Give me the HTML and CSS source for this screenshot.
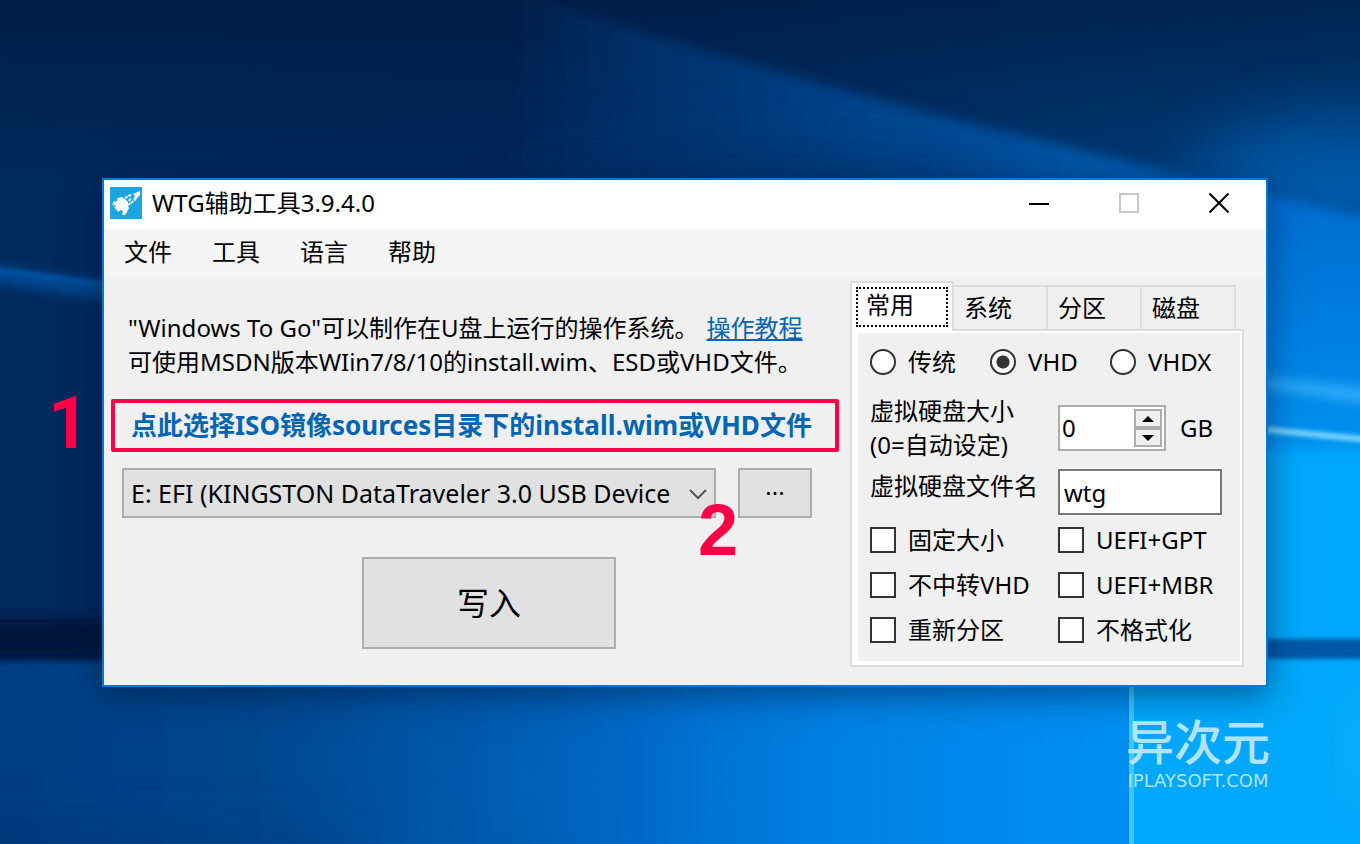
FILE: index.html
```
<!DOCTYPE html>
<html lang="zh-CN">
<head>
  <meta charset="UTF-8">
  <title>WTG辅助工具3.9.4.0</title>
  <link rel="stylesheet" href="styles.css">
</head>
<body>

  <svg class="wallpaper" viewBox="0 0 1360 844" preserveAspectRatio="none" aria-hidden="true">
    <defs>
      <linearGradient id="sky" x1="0" y1="0" x2="1" y2="0">
        <stop offset="0" stop-color="#002a5c"></stop>
        <stop offset="0.4" stop-color="#00285c"></stop>
        <stop offset="0.75" stop-color="#003670"></stop>
        <stop offset="1" stop-color="#003e7c"></stop>
      </linearGradient>
      <linearGradient id="topShade" x1="0" y1="0" x2="0" y2="1">
        <stop offset="0" stop-color="#001a40" stop-opacity="0.7"></stop>
        <stop offset="1" stop-color="#001a40" stop-opacity="0"></stop>
      </linearGradient>
      <linearGradient id="beam" gradientUnits="userSpaceOnUse" x1="510" y1="0" x2="1230" y2="0">
        <stop offset="0" stop-color="#003a7c" stop-opacity="0"></stop>
        <stop offset="0.2" stop-color="#003a7c" stop-opacity="0.6"></stop>
        <stop offset="0.5" stop-color="#00468e"></stop>
        <stop offset="0.85" stop-color="#0058aa"></stop>
        <stop offset="1" stop-color="#005aac"></stop>
      </linearGradient>
      <linearGradient id="side" x1="0" y1="0" x2="0" y2="1">
        <stop offset="0" stop-color="#006cd0"></stop>
        <stop offset="0.3" stop-color="#007fe2"></stop>
        <stop offset="0.6" stop-color="#0098f4"></stop>
        <stop offset="1" stop-color="#00aeff"></stop>
      </linearGradient>
      <linearGradient id="floor" x1="0" y1="0" x2="1" y2="0">
        <stop offset="0" stop-color="#003c80"></stop>
        <stop offset="0.25" stop-color="#004890"></stop>
        <stop offset="0.5" stop-color="#0060b8"></stop>
        <stop offset="0.62" stop-color="#0072d2"></stop>
        <stop offset="0.76" stop-color="#0082e6"></stop>
        <stop offset="1" stop-color="#0090f2"></stop>
      </linearGradient>
      <filter id="soft" x="-20%" y="-50%" width="140%" height="200%"><feGaussianBlur stdDeviation="6"></feGaussianBlur></filter>
      <filter id="softer" x="-50%" y="-100%" width="200%" height="300%"><feGaussianBlur stdDeviation="32"></feGaussianBlur></filter>
      <filter id="fine" x="-20%" y="-100%" width="140%" height="300%"><feGaussianBlur stdDeviation="2"></feGaussianBlur></filter>
    </defs>

    <rect width="1360" height="844" fill="url(#sky)"></rect>
    <rect width="1360" height="180" fill="url(#topShade)"></rect>
    <ellipse cx="1340" cy="190" rx="150" ry="70" fill="#0064b8" opacity="0.7" filter="url(#softer)"></ellipse>
    <path d="M500 -10L720 56L930 114L1240 188V260H500Z" fill="url(#beam)" filter="url(#soft)"></path>
    <ellipse cx="760" cy="190" rx="240" ry="40" fill="#002a60" opacity="0.5" filter="url(#softer)"></ellipse>

    <!-- left of the window -->
    <path d="M-20 264L130 288V302L-20 280Z" fill="#004c98" filter="url(#soft)"></path>
    <path d="M-20 266L130 286V290L-20 270Z" fill="#0058aa" filter="url(#fine)"></path>
    <rect x="-20" y="618" width="400" height="40" fill="#00143a" filter="url(#soft)"></rect>

    <!-- right of the window -->
    <path d="M1180 190L1270 196L1400 226V680H1180Z" fill="url(#side)" filter="url(#soft)"></path>
    <path d="M1240 376L1400 392V408L1240 384Z" fill="#30aefc" filter="url(#soft)"></path>
    <rect x="1180" y="450" width="200" height="210" fill="#00a8fc" filter="url(#soft)"></rect>
    <path d="M1240 424L1400 440V446L1240 430Z" fill="#7cd8ff" filter="url(#fine)"></path>

    <!-- lower half -->
    <rect x="-20" y="662" width="1152" height="200" fill="url(#floor)" filter="url(#fine)"></rect>
    <ellipse cx="40" cy="860" rx="340" ry="30" fill="#002c66" opacity="0.4" filter="url(#softer)"></ellipse>
    <ellipse cx="580" cy="780" rx="100" ry="50" fill="#0068c4" opacity="0.3" filter="url(#softer)"></ellipse>
    <rect x="1132" y="660" width="228" height="184" fill="#00a8fc"></rect>
    <rect x="1200" y="639" width="200" height="20" fill="#0058a8" filter="url(#fine)"></rect>
    <ellipse cx="1375" cy="750" rx="20" ry="50" fill="#40c4ff" opacity="0.5" filter="url(#softer)"></ellipse>
    <rect x="1129" y="680" width="5" height="164" fill="#3cc8ff"></rect>
  </svg>

  <main class="window">
    <header class="titlebar">
      <svg class="app-icon" viewBox="0 0 32 32" aria-hidden="true">
        <rect width="32" height="32" fill="#1ba6e2"></rect>
        <path d="M3 14L6 15L8 11L12 10L15 12L18 15V19L19 21L17 25L15 28H12L13 24L11 23L8 25L7 22L4 21L6 19L4 18Z" fill="#fff"></path>
        <path d="M2 16L4 19M5 22L8 24" stroke="#b4e2f6" stroke-width="1"></path>
        <path d="M23 7L30 4V8L26 12L23 12L25 9Z" fill="#fff"></path>
        <path d="M15 11L22 7M19 14L21 11M21 16L26 12M18 18L22 15" stroke="#fff" stroke-width="2" stroke-dasharray="3 1"></path>
      </svg>
      <h1 class="title">WTG辅助工具3.9.4.0</h1>
      <div class="window-buttons">
        <button type="button" aria-label="最小化">
          <svg viewBox="0 0 20 20"><path d="M0 11H20" stroke="#000" stroke-width="2"></path></svg>
        </button>
        <button type="button" aria-label="最大化" disabled>
          <svg viewBox="0 0 20 20"><rect x="1" y="1" width="18" height="18" fill="none" stroke="#c8c8c8" stroke-width="2"></rect></svg>
        </button>
        <button type="button" aria-label="关闭">
          <svg viewBox="0 0 20 20"><path d="M0.5 0.5L19.5 19.5M19.5 0.5L0.5 19.5" stroke="#000" stroke-width="2"></path></svg>
        </button>
      </div>
    </header>

    <nav class="menu">
      <button type="button">文件</button>
      <button type="button">工具</button>
      <button type="button">语言</button>
      <button type="button">帮助</button>
    </nav>

    <div class="content">
      <section class="source">
        <p class="intro">"Windows To Go"可以制作在U盘上运行的操作系统。<a href="#">操作教程</a><br>可使用MSDN版本WIin7/8/10的install.wim、ESD或VHD文件。</p>

        <div class="highlight">
          <span class="step step-one">1</span>
          <a href="#">点此选择ISO镜像sources目录下的install.wim或VHD文件</a>
        </div>

        <div class="device">
          <div class="combo">
            <select aria-label="USB设备">
              <option>E: EFI (KINGSTON DataTraveler 3.0 USB Device</option>
            </select>
            <svg class="chevron" viewBox="0 0 18 12" aria-hidden="true"><path d="M1 2L9 10L17 2" fill="none" stroke="#555" stroke-width="2"></path></svg>
            <span class="step step-two">2</span>
          </div>
          <button type="button" class="browse">···</button>
        </div>

        <button type="button" class="write">写入</button>
      </section>

      <section class="options">
        <div class="tabs" role="tablist">
          <button type="button" role="tab" class="tab active" aria-selected="true"><span>常用</span></button>
          <button type="button" role="tab" class="tab">系统</button>
          <button type="button" role="tab" class="tab">分区</button>
          <button type="button" role="tab" class="tab">磁盘</button>
        </div>

        <div class="page">
          <div class="modes">
            <label class="check"><input type="radio" name="mode">传统</label>
            <label class="check"><input type="radio" name="mode" checked>VHD</label>
            <label class="check"><input type="radio" name="mode">VHDX</label>
          </div>

          <div class="field size">
            <label for="size">虚拟硬盘大小<br>(0=自动设定)</label>
            <div class="spin">
              <input type="number" id="size" value="0">
              <div class="spin-buttons">
                <button type="button" aria-label="增加"><svg viewBox="0 0 12 6"><path d="M0 6L6 0L12 6Z"></path></svg></button>
                <button type="button" aria-label="减少"><svg viewBox="0 0 12 6"><path d="M0 0H12L6 6Z"></path></svg></button>
              </div>
            </div>
            <span class="unit">GB</span>
          </div>

          <div class="field">
            <label for="name">虚拟硬盘文件名</label>
            <input type="text" id="name" class="name" value="wtg">
          </div>

          <div class="checks">
            <label class="check"><input type="checkbox">固定大小</label>
            <label class="check"><input type="checkbox">UEFI+GPT</label>
            <label class="check"><input type="checkbox">不中转VHD</label>
            <label class="check"><input type="checkbox">UEFI+MBR</label>
            <label class="check"><input type="checkbox">重新分区</label>
            <label class="check"><input type="checkbox">不格式化</label>
          </div>
        </div>
      </section>
    </div>
  </main>

  <div class="watermark">
    <strong>异次元</strong>
    <span>IPLAYSOFT.COM</span>
  </div>

</body>
</html>
```
FILE: styles.css
```
* {
  box-sizing: border-box;
}

body {
  margin: 0;
  min-height: 100vh;
  padding: 178px 92px 0 102px;
  position: relative;
  overflow: hidden;
  background: #00265a;
  color: #000;
  font-family: "Noto Sans", "Noto Sans CJK SC", sans-serif;
  font-size: 24px;
  line-height: 34px;
}

button,
input,
select {
  font: inherit;
  color: inherit;
  margin: 0;
  padding: 0;
  border: none;
  border-radius: 0;
  background: none;
}

a {
  color: #0066b4;
}

.wallpaper {
  position: absolute;
  top: 0;
  left: 0;
  width: 100%;
  height: 100%;
}

/* window */

.window {
  position: relative;
  background: #f0f0f0;
  border: 2px solid #0078d7;
  box-shadow: 0 8px 32px rgba(0, 20, 50, 0.5);
}

.titlebar {
  display: flex;
  align-items: center;
  background: #fff;
  padding: 0 2px 3px 6px;
  height: 49px;
}

.app-icon {
  width: 32px;
  height: 32px;
}

.title {
  flex: 1;
  margin: 0 0 0 10px;
  font-size: 24px;
  font-weight: 400;
}

.window-buttons {
  display: flex;
}

.window-buttons button {
  width: 90px;
  height: 46px;
  display: flex;
  align-items: center;
  justify-content: center;
}

.window-buttons svg {
  width: 20px;
  height: 20px;
}

.menu {
  display: flex;
  gap: 40px;
  height: 48px;
  padding: 0 0 2px 20px;
  background: #f5f5f5;
}

.content {
  display: flex;
  padding-bottom: 18px;
}

/* left side */

.source {
  flex: 1;
  padding-top: 34px;
}

.intro {
  margin: 0 0 20px 24px;
  white-space: nowrap;
}

.intro a {
  margin-left: 8px;
}

.highlight {
  position: relative;
  margin: 0 11px 16px 7px;
  height: 53px;
  padding: 5px 16px;
  border: 4px solid #ff0046;
  border-radius: 2px;
  white-space: nowrap;
}

.highlight a {
  font-size: 26px;
  font-weight: 700;
  text-decoration: none;
}

.step {
  position: absolute;
  color: #ff0046;
  font: bold 72px/72px "Liberation Sans", Arial, sans-serif;
  pointer-events: none;
}

/* Roboto draws the 1 without a foot */
.step-one {
  left: -67px;
  top: -15px;
  font-family: Roboto, sans-serif;
}

.step-two {
  right: -22px;
  top: 26px;
  z-index: 1;
}

.device {
  display: flex;
  gap: 22px;
  margin: 0 38px 39px 18px;
}

.combo {
  position: relative;
  flex: 1;
}

.combo select {
  display: block;
  width: 100%;
  height: 50px;
  padding-left: 7px;
  appearance: none;
  background: #e1e1e1;
  border: 2px solid #adadad;
  font-size: 25px;
}

.chevron {
  position: absolute;
  right: 9px;
  top: 20px;
  width: 18px;
  height: 12px;
}

.browse,
.write {
  background: #e1e1e1;
  border: 2px solid #adadad;
}

.browse {
  width: 74px;
  height: 50px;
}

.write {
  display: block;
  width: 254px;
  height: 92px;
  margin-left: 258px;
  font-size: 32px;
}

/* right side */

.options {
  width: 394px;
  margin: 4px 22px 0 0;
}

.tabs {
  display: flex;
  align-items: flex-end;
}

.tab {
  width: 94px;
  height: 44px;
  padding-left: 10px;
  text-align: left;
  border: 2px solid #dcdcdc;
  border-width: 2px 2px 0 0;
}

.tab.active {
  position: relative;
  width: 104px;
  height: 50px;
  margin-bottom: -2px;
  padding: 4px;
  background: #fff;
  border-width: 2px 2px 0 2px;
}

.tab.active span {
  display: block;
  height: 40px;
  padding-left: 8px;
  line-height: 32px;
  border: 2px dotted #000;
}

.page {
  padding: 2px 2px 4px 6px;
  background: #f0f0f0;
  border: 2px solid #dcdcdc;
  box-shadow: inset 6px 0 #fff, inset -2px 0 #fff, inset 0 2px #fff, inset 0 -4px #fff;
}

.modes {
  display: grid;
  grid-template-columns: repeat(3, 120px);
  padding: 12px 0 15px 12px;
}

.check {
  display: flex;
  align-items: center;
  gap: 12px;
  white-space: nowrap;
}

.check input {
  appearance: none;
  width: 26px;
  height: 26px;
  background: #fff;
  border: 2px solid #333;
}

.check input[type="radio"] {
  border-radius: 50%;
}

.check input[type="radio"]:checked {
  background: radial-gradient(circle, #333 6px, #fff 7px);
}

.check input[type="checkbox"]:checked {
  background: #333;
}

.field {
  display: grid;
  grid-template-columns: 188px auto auto 1fr;
  padding-left: 12px;
}

.size {
  align-items: center;
  margin-bottom: 7px;
}

.spin {
  display: flex;
  width: 108px;
  height: 46px;
  padding: 2px;
  background: #fff;
  border: 2px solid #adadad;
}

.spin input {
  flex: 1;
  min-width: 0;
  appearance: textfield;
}

.spin input::-webkit-inner-spin-button {
  appearance: none;
}

.spin-buttons {
  display: flex;
  flex-direction: column;
}

.spin-buttons button {
  width: 28px;
  height: 19px;
  display: flex;
  align-items: center;
  justify-content: center;
  background: #f0f0f0;
  border: 2px solid #adadad;
}

.spin-buttons svg {
  width: 12px;
  height: 6px;
}

.unit {
  margin-left: 14px;
}

.name {
  width: 164px;
  height: 46px;
  padding-left: 4px;
  background: #fff;
  border: 2px solid #7a7a7a;
}

.checks {
  display: grid;
  grid-template-columns: 188px auto;
  grid-auto-rows: 45px;
  padding: 2px 0 9px 12px;
}

/* site mark */

.watermark {
  position: absolute;
  right: 90px;
  bottom: 52px;
  color: #b0e4fc;
  display: flex;
  flex-direction: column;
  align-items: center;
}

.watermark strong {
  font-size: 48px;
  font-weight: 500;
  line-height: 56px;
}

.watermark span {
  font: 18px/22px "DejaVu Sans", sans-serif;
}
```
